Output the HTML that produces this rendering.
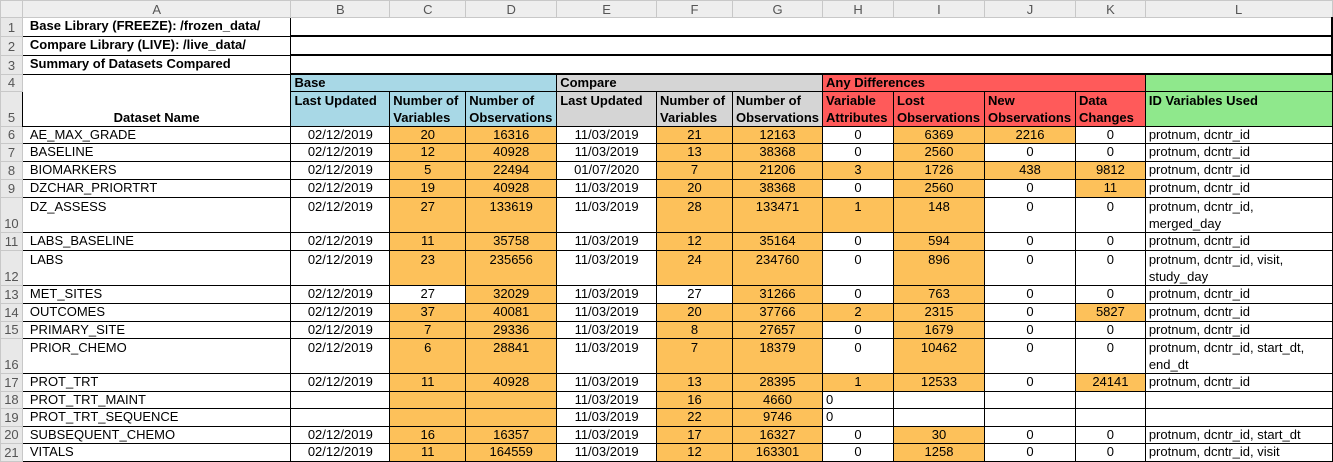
<!DOCTYPE html>
<html><head><meta charset="utf-8"><style>
body{margin:0;width:1333px;height:462px;overflow:hidden;background:#fff;font-family:"Liberation Sans",Arial,sans-serif;font-size:13px;color:#000}
table{border-collapse:collapse;table-layout:fixed;position:absolute;left:0;top:0}
td{padding:0 3px;border:1px solid #000;white-space:nowrap;overflow:hidden;height:17px;line-height:16px;vertical-align:top;text-align:center}
td.h{background:#e8e8e8;color:#555;border:1px solid #c8c8c8;text-align:center;vertical-align:bottom;padding:0}
tr.ch td{background:#eeeeee;color:#555;border:1px solid #c8c8c8;height:16px;line-height:15px;vertical-align:middle}
tr.s td{height:16px}
td.l{text-align:left}
td.a{padding-left:7px}
.o{background:#fdc15a}
.b{background:#a8d8e6;font-weight:bold;text-align:left}
.g{background:#d5d5d5;font-weight:bold;text-align:left}
.r{background:#ff5a5a;font-weight:bold;text-align:left}
.gr{background:#8fe88c;font-weight:bold;text-align:left}
.bo{font-weight:bold;text-align:left;padding-left:7px}
tr.t td{height:34px;line-height:17px}
tr.t5 td{height:34px;line-height:17px}
</style></head><body>
<table>
<colgroup><col style="width:22px"><col style="width:269px"><col style="width:99px"><col style="width:76px"><col style="width:91px"><col style="width:100px"><col style="width:76px"><col style="width:90px"><col style="width:71px"><col style="width:91px"><col style="width:91px"><col style="width:70px"><col style="width:187px"></colgroup>
<tr class="ch"><td></td><td>A</td><td>B</td><td>C</td><td>D</td><td>E</td><td>F</td><td>G</td><td>H</td><td>I</td><td>J</td><td>K</td><td>L</td></tr>
<tr><td class="h">1</td><td class="bo">Base Library (FREEZE): /frozen_data/</td><td colspan="11" style="border-width:1px 2px 2px 1px"></td></tr>
<tr><td class="h">2</td><td class="bo">Compare Library (LIVE): /live_data/</td><td colspan="11" style="border-width:1px 2px 2px 1px"></td></tr>
<tr><td class="h">3</td><td class="bo">Summary of Datasets Compared</td><td colspan="11" style="border-width:1px 2px 2px 1px"></td></tr>
<tr class="s"><td class="h">4</td><td rowspan="2" style="font-weight:bold;vertical-align:bottom">Dataset Name</td><td colspan="3" class="b">Base</td><td colspan="3" class="g">Compare</td><td colspan="4" class="r">Any Differences</td><td class="gr"></td></tr>
<tr class="t5"><td class="h">5</td><td class="b">Last Updated</td><td class="b">Number of<br>Variables</td><td class="b">Number of<br>Observations</td><td class="g">Last Updated</td><td class="g">Number of<br>Variables</td><td class="g">Number of<br>Observations</td><td class="r">Variable<br>Attributes</td><td class="r">Lost<br>Observations</td><td class="r">New<br>Observations</td><td class="r">Data<br>Changes</td><td class="gr">ID Variables Used</td></tr>
<tr class="s"><td class="h">6</td><td class="l a">AE_MAX_GRADE</td><td>02/12/2019</td><td class="o">20</td><td class="o">16316</td><td>11/03/2019</td><td class="o">21</td><td class="o">12163</td><td>0</td><td class="o">6369</td><td class="o">2216</td><td>0</td><td class="l">protnum, dcntr_id</td></tr>
<tr><td class="h">7</td><td class="l a">BASELINE</td><td>02/12/2019</td><td class="o">12</td><td class="o">40928</td><td>11/03/2019</td><td class="o">13</td><td class="o">38368</td><td>0</td><td class="o">2560</td><td>0</td><td>0</td><td class="l">protnum, dcntr_id</td></tr>
<tr><td class="h">8</td><td class="l a">BIOMARKERS</td><td>02/12/2019</td><td class="o">5</td><td class="o">22494</td><td>01/07/2020</td><td class="o">7</td><td class="o">21206</td><td class="o">3</td><td class="o">1726</td><td class="o">438</td><td class="o">9812</td><td class="l">protnum, dcntr_id</td></tr>
<tr><td class="h">9</td><td class="l a">DZCHAR_PRIORTRT</td><td>02/12/2019</td><td class="o">19</td><td class="o">40928</td><td>11/03/2019</td><td class="o">20</td><td class="o">38368</td><td>0</td><td class="o">2560</td><td>0</td><td class="o">11</td><td class="l">protnum, dcntr_id</td></tr>
<tr class="t"><td class="h">10</td><td class="l a">DZ_ASSESS</td><td>02/12/2019</td><td class="o">27</td><td class="o">133619</td><td>11/03/2019</td><td class="o">28</td><td class="o">133471</td><td class="o">1</td><td class="o">148</td><td>0</td><td>0</td><td class="l">protnum, dcntr_id,<br>merged_day</td></tr>
<tr><td class="h">11</td><td class="l a">LABS_BASELINE</td><td>02/12/2019</td><td class="o">11</td><td class="o">35758</td><td>11/03/2019</td><td class="o">12</td><td class="o">35164</td><td>0</td><td class="o">594</td><td>0</td><td>0</td><td class="l">protnum, dcntr_id</td></tr>
<tr class="t"><td class="h">12</td><td class="l a">LABS</td><td>02/12/2019</td><td class="o">23</td><td class="o">235656</td><td>11/03/2019</td><td class="o">24</td><td class="o">234760</td><td>0</td><td class="o">896</td><td>0</td><td>0</td><td class="l">protnum, dcntr_id, visit,<br>study_day</td></tr>
<tr><td class="h">13</td><td class="l a">MET_SITES</td><td>02/12/2019</td><td>27</td><td class="o">32029</td><td>11/03/2019</td><td>27</td><td class="o">31266</td><td>0</td><td class="o">763</td><td>0</td><td>0</td><td class="l">protnum, dcntr_id</td></tr>
<tr><td class="h">14</td><td class="l a">OUTCOMES</td><td>02/12/2019</td><td class="o">37</td><td class="o">40081</td><td>11/03/2019</td><td class="o">20</td><td class="o">37766</td><td class="o">2</td><td class="o">2315</td><td>0</td><td class="o">5827</td><td class="l">protnum, dcntr_id</td></tr>
<tr class="s"><td class="h">15</td><td class="l a">PRIMARY_SITE</td><td>02/12/2019</td><td class="o">7</td><td class="o">29336</td><td>11/03/2019</td><td class="o">8</td><td class="o">27657</td><td>0</td><td class="o">1679</td><td>0</td><td>0</td><td class="l">protnum, dcntr_id</td></tr>
<tr class="t"><td class="h">16</td><td class="l a">PRIOR_CHEMO</td><td>02/12/2019</td><td class="o">6</td><td class="o">28841</td><td>11/03/2019</td><td class="o">7</td><td class="o">18379</td><td>0</td><td class="o">10462</td><td>0</td><td>0</td><td class="l">protnum, dcntr_id, start_dt,<br>end_dt</td></tr>
<tr><td class="h">17</td><td class="l a">PROT_TRT</td><td>02/12/2019</td><td class="o">11</td><td class="o">40928</td><td>11/03/2019</td><td class="o">13</td><td class="o">28395</td><td class="o">1</td><td class="o">12533</td><td>0</td><td class="o">24141</td><td class="l">protnum, dcntr_id</td></tr>
<tr class="s"><td class="h">18</td><td class="l a">PROT_TRT_MAINT</td><td></td><td class="o"></td><td class="o"></td><td>11/03/2019</td><td class="o">16</td><td class="o">4660</td><td class="l">0</td><td></td><td></td><td></td><td></td></tr>
<tr><td class="h">19</td><td class="l a">PROT_TRT_SEQUENCE</td><td></td><td class="o"></td><td class="o"></td><td>11/03/2019</td><td class="o">22</td><td class="o">9746</td><td class="l">0</td><td></td><td></td><td></td><td></td></tr>
<tr class="s"><td class="h">20</td><td class="l a">SUBSEQUENT_CHEMO</td><td>02/12/2019</td><td class="o">16</td><td class="o">16357</td><td>11/03/2019</td><td class="o">17</td><td class="o">16327</td><td>0</td><td class="o">30</td><td>0</td><td>0</td><td class="l">protnum, dcntr_id, start_dt</td></tr>
<tr><td class="h">21</td><td class="l a">VITALS</td><td>02/12/2019</td><td class="o">11</td><td class="o">164559</td><td>11/03/2019</td><td class="o">12</td><td class="o">163301</td><td>0</td><td class="o">1258</td><td>0</td><td>0</td><td class="l">protnum, dcntr_id, visit</td></tr>
</table>
</body></html>
